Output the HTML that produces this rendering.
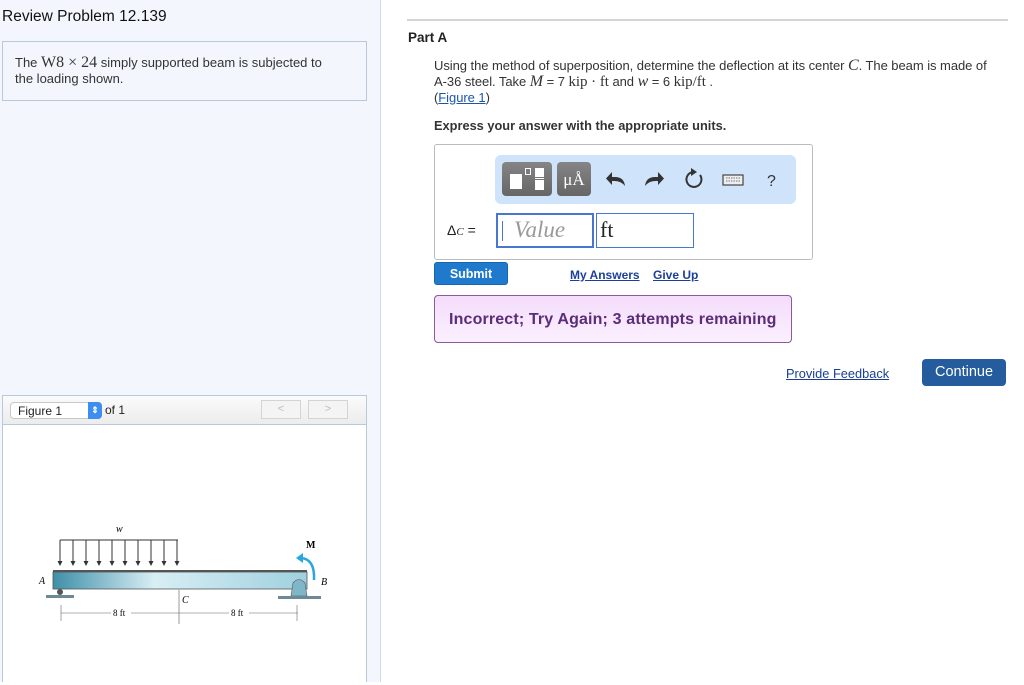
<!DOCTYPE html>
<html><head><meta charset="utf-8">
<style>
*{box-sizing:border-box;margin:0;padding:0}
body{width:1024px;height:682px;overflow:hidden;background:#fff;font-family:"Liberation Sans",Arial,sans-serif;color:#222;position:relative}
.left{position:absolute;left:0;top:0;width:381px;height:682px;background:#f3f7fd;border-right:1px solid #d0dbe8}
.title{position:absolute;left:2px;top:8px;font-size:15.5px;color:#111}
.intro{position:absolute;left:2px;top:41px;width:365px;height:60px;border:1px solid #b9c9d8;background:#f3f7fd;font-size:13px;padding:13px 12px;line-height:16px;color:#333}
.serif{font-family:"Liberation Serif",serif;font-size:16px}
.fig{position:absolute;left:2px;top:395px;width:365px;height:287px;background:#fff;border:1px solid #b9c9d8;border-bottom:none}
.fighead{height:29px;background:linear-gradient(#fbfbfb,#ececec);border-bottom:1px solid #b9c9d8;position:relative}
.sel{position:absolute;left:7px;top:6px;width:92px;height:17px;background:#fff;border:1px solid #c7c7c7;border-radius:4px;font-size:12px;padding:1px 0 0 7px}
.sel b{position:absolute;right:-1px;top:-1px;width:14px;height:17px;background:#3d8ef0;border-radius:0 4px 4px 0;color:#fff;font-size:9px;text-align:center;line-height:17px}
.of{position:absolute;left:102px;top:7px;font-size:12px}
.nav{position:absolute;top:4px;width:40px;height:19px;border:1px solid #d4d4d4;background:#f4f4f4;color:#bbb;font-size:11px;text-align:center;line-height:17px}
.rule{position:absolute;left:407px;top:19px;width:601px;height:2px;background:#d4d4d4}
.parta{position:absolute;left:408px;top:30px;font-size:13.5px;font-weight:bold;color:#222}
.q{position:absolute;left:434px;top:58px;width:585px;font-size:13px;line-height:16px;color:#333;letter-spacing:-0.05px}
.q a{color:#1a56b0}
.exp{position:absolute;left:434px;top:118px;font-size:12.8px;font-weight:bold;color:#333}
.ans{position:absolute;left:434px;top:144px;width:379px;height:116px;border:1px solid #bbb;border-radius:3px}
.tb{position:absolute;left:495px;top:155px;width:301px;height:49px;background:#cfe4fb;border-radius:6px}
.tbtn{position:absolute;top:7px;height:34px;background:linear-gradient(#858585,#666);border-radius:4px}
.lab{position:absolute;left:447px;top:222px;font-size:14px}
.val{position:absolute;left:496px;top:213px;width:98px;height:35px;border:2px solid #4877d0;font-family:"Liberation Serif",serif;font-style:italic;font-size:23px;color:#999;padding:2px 0 0 16px}
.val:before{content:"";position:absolute;left:4px;top:6px;width:1px;height:20px;background:#4877d0}
.unit{position:absolute;left:596px;top:213px;width:98px;height:35px;border:1px solid #4877d0;font-family:"Liberation Serif",serif;font-size:22px;padding:3px 0 0 3px}
.submit{position:absolute;left:434px;top:262px;width:74px;height:23px;background:#1f7ace;border:1px solid #1766ad;border-radius:3px;color:#fff;font-weight:bold;font-size:12.5px;text-align:center;line-height:22px}
.lnk{position:absolute;top:268px;font-size:12px;font-weight:bold;color:#1b3f9a;text-decoration:underline}
.inc{position:absolute;left:434px;top:295px;width:358px;height:48px;background:linear-gradient(#f4dcfb,#fbf0fe);border:1px solid #8a5a9a;border-radius:4px;color:#5a2d78;font-weight:bold;font-size:16px;line-height:48px;padding-left:14px;letter-spacing:0.15px}
.fb{position:absolute;left:786px;top:366px;font-size:12.8px;color:#1a3e96;text-decoration:underline}
.cont{position:absolute;left:922px;top:359px;width:84px;height:27px;background:#245c9e;border-radius:4px;color:#fff;font-size:14.5px;text-align:center;line-height:26px}
</style></head><body>
<div class="left">
<div class="title">Review Problem 12.139</div>
<div class="intro">The <span class="serif">W8 × 24</span> simply supported beam is subjected to<br>the loading shown.</div>
<div class="fig">
<div class="fighead"><div class="sel">Figure 1<b>⇕</b></div><div class="of">of 1</div>
<div class="nav" style="left:258px">&lt;</div><div class="nav" style="left:305px">&gt;</div></div>
<svg width="365" height="260" style="position:absolute;left:0;top:29px" font-family="Liberation Serif,serif">
<defs><linearGradient id="bg" x1="0" x2="1"><stop offset="0" stop-color="#3e8fa8"/><stop offset=".4" stop-color="#d8eef5"/><stop offset="1" stop-color="#9fd0de"/></linearGradient></defs>
<text x="113" y="107" font-size="10" font-style="italic">w</text>
<line x1="57" y1="115" x2="175" y2="115" stroke="#333" stroke-width="1"/>
<g stroke="#333" stroke-width="1">
<path d="M57 115 V140 M70 115 V140 M83 115 V140 M96 115 V140 M109 115 V140 M122 115 V140 M135 115 V140 M148 115 V140 M161 115 V140 M174 115 V140"/></g>
<g fill="#333"><path d="M54.5 136 L57 141 L59.5 136Z M67.5 136 L70 141 L72.5 136Z M80.5 136 L83 141 L85.5 136Z M93.5 136 L96 141 L98.5 136Z M106.5 136 L109 141 L111.5 136Z M119.5 136 L122 141 L124.5 136Z M132.5 136 L135 141 L137.5 136Z M145.5 136 L148 141 L150.5 136Z M158.5 136 L161 141 L163.5 136Z M171.5 136 L174 141 L176.5 136Z"/></g>
<rect x="50" y="145" width="254" height="3" fill="#555"/>
<rect x="50" y="147" width="254" height="17" fill="url(#bg)" stroke="#555" stroke-width=".8"/>
<text x="36" y="159" font-size="10" font-style="italic">A</text>
<text x="318" y="160" font-size="10" font-style="italic">B</text>
<text x="303" y="123" font-size="10" font-weight="bold">M</text>
<path d="M298 133 Q312 134 311 155" fill="none" stroke="#2aa7e0" stroke-width="2.5"/>
<path d="M293 133 L300 128 L300 138Z" fill="#2aa7e0"/>
<circle cx="57" cy="167" r="3" fill="#555"/><rect x="43" y="170" width="28" height="3" fill="#6b8a93"/>
<path d="M288 171 L290 158 Q296 151 302 158 L304 171Z" fill="#7fb7c8" stroke="#555" stroke-width=".6"/>
<rect x="275" y="171" width="43" height="3" fill="#6b8a93"/>
<line x1="176" y1="165" x2="176" y2="199" stroke="#555" stroke-width=".6"/>
<text x="179" y="178" font-size="10" font-style="italic">C</text>
<line x1="58" y1="188" x2="295" y2="188" stroke="#666" stroke-width=".6"/>
<line x1="58" y1="180" x2="58" y2="196" stroke="#666" stroke-width=".6"/>
<line x1="294" y1="180" x2="294" y2="196" stroke="#666" stroke-width=".6"/>
<rect x="108" y="183" width="20" height="10" fill="#fff"/><text x="110" y="191" font-size="9">8 ft</text>
<rect x="226" y="183" width="20" height="10" fill="#fff"/><text x="228" y="191" font-size="9">8 ft</text>
</svg>
</div>
</div>
<div class="rule"></div>
<div class="parta">Part A</div>
<div class="q">Using the method of superposition, determine the deflection at its center <span class="serif" style="font-style:italic">C</span>. The beam is made of<br>A-36 steel. Take <span class="serif" style="font-style:italic">M</span> = 7 <span class="serif" style="font-size:15px">kip · ft</span> and <span class="serif" style="font-style:italic">w</span> = 6 <span class="serif" style="font-size:15px">kip/ft</span> .<br>(<a href="#">Figure 1</a>)</div>
<div class="exp">Express your answer with the appropriate units.</div>
<div class="ans"></div>
<div class="tb">
<div class="tbtn" style="left:7px;width:50px"><div style="position:absolute;left:8px;top:12px;width:12px;height:15px;background:#fff"></div><div style="position:absolute;left:23px;top:6px;width:6px;height:7px;border:1px solid #fff"></div><div style="position:absolute;left:33px;top:6px;width:9px;height:9px;background:#fff"></div><div style="position:absolute;left:33px;top:16px;width:9px;height:1px;background:#fff"></div><div style="position:absolute;left:33px;top:18px;width:9px;height:10px;background:#fff"></div></div>
<div class="tbtn" style="left:62px;width:34px;color:#fff;font-family:'Liberation Serif',serif;font-size:17px;text-align:center;line-height:36px">μÅ</div>
<svg width="301" height="49" style="position:absolute;left:0;top:0">
<path d="M130 31 Q129 22 120 22 L117 22 L117 17 L111 23.5 L117 30 L117 26 L120 26 Q126 26 130 31Z" fill="#333"/>
<path d="M150 31 Q151 22 160 22 L163 22 L163 17 L169 23.5 L163 30 L163 26 L160 26 Q154 26 150 31Z" fill="#333"/>
<path d="M205 20 A7.5 7.5 0 1 1 198 17" fill="none" stroke="#333" stroke-width="2"/><path d="M196 13 L202 17 L196 21Z" fill="#333"/>
<rect x="228" y="20" width="20" height="10" fill="#eee" stroke="#444" stroke-width="1.2"/>
<path d="M231 23 H245 M231 26 H245" stroke="#777" stroke-width="1" stroke-dasharray="1.5 1"/>
<text x="272" y="31" font-size="16" font-family="Liberation Sans" fill="#333">?</text>
</svg>
</div>
<div class="lab">Δ<span class="serif" style="font-style:italic;font-size:11px">C</span> =</div>
<div class="val">Value</div>
<div class="unit">ft</div>
<div class="submit">Submit</div>
<div class="lnk" style="left:570px">My Answers</div>
<div class="lnk" style="left:653px">Give Up</div>
<div class="inc">Incorrect; Try Again; 3 attempts remaining</div>
<div class="fb">Provide Feedback</div>
<div class="cont">Continue</div>
</body></html>
